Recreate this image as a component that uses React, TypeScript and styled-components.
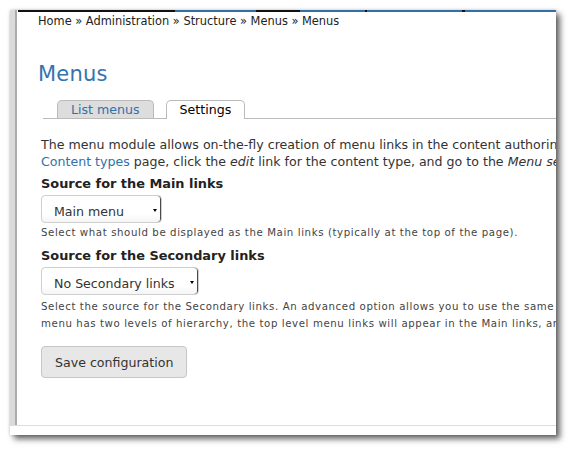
import React from "react";
import styled, { createGlobalStyle } from "styled-components";

const GlobalStyle = createGlobalStyle`
  html, body {
    margin: 0;
    padding: 0;
    background: #fff;
  }
  body {
    font-family: "DejaVu Sans", Verdana, sans-serif;
    color: #333;
  }
`;

const Page = styled.div`
  padding: 10px 0 0 10px;
  width: 572px;
  height: 451px;
  box-sizing: border-box;
`;

const Window = styled.div`
  width: 546px;
  height: 425px;
  background: #fff;
  display: flex;
  flex-direction: column;
  overflow: hidden;
  box-shadow: 4px 4px 6px rgba(0, 0, 0, 0.6), 0 0 3px rgba(0, 0, 0, 0.2);
`;

const Body = styled.div`
  flex: 1;
  display: flex;
  min-height: 0;
`;

const Rail = styled.div`
  width: 5px;
  flex-shrink: 0;
  background: #dadada;
  border-right: 2px solid #ababab;
`;

const Main = styled.div`
  flex: 1;
  min-width: 0;
  overflow: hidden;
  padding-left: 1px;
`;

const TopBar = styled.div`
  height: 2px;
  background: linear-gradient(
    to right,
    #111 0 157px,
    #3370a9 157px 238px,
    #111 238px 282px,
    #3370a9 282px 347px,
    #111 347px 349px,
    #3370a9 349px 444px,
    #111 444px 447px,
    #3370a9 447px
  );
`;

const Content = styled.div`
  padding-left: 20px;
  width: 1200px;
`;

const Breadcrumb = styled.div`
  font-size: 11.4px;
  line-height: 18px;
  color: #222;
  white-space: nowrap;
`;

const Title = styled.h1`
  margin: 30px 0 0;
  font-size: 21px;
  line-height: 28px;
  font-weight: normal;
  color: #3474ad;
  letter-spacing: 0.2px;
`;

const TabBar = styled.div`
  margin: 12px 0 0 5px;
  display: flex;
  gap: 12px;
  padding-left: 14px;
  border-bottom: 1px solid #bbb;
`;

const Tab = styled.div<{ $active?: boolean }>`
  box-sizing: border-box;
  padding: 0 13px;
  border: 1px solid #bbb;
  border-bottom: none;
  border-radius: 5px 5px 0 0;
  background: ${(p) => (p.$active ? "#fff" : "#ddd")};
  color: ${(p) => (p.$active ? "#000" : "#3370aa")};
  font-size: 12.6px;
  line-height: 17px;
  margin-bottom: ${(p) => (p.$active ? "-1px" : "0")};
  height: ${(p) => (p.$active ? "19px" : "18px")};
`;

const Form = styled.div`
  margin-left: 3px;
  padding-top: 17px;
`;

const Intro = styled.p`
  margin: 0;
  font-size: 12.6px;
  line-height: 17px;
  color: #333;
  white-space: nowrap;
`;

const Link = styled.a`
  color: #3370aa;
  text-decoration: none;
`;

const Field = styled.div<{ $top: number }>`
  margin-top: ${(p) => p.$top}px;
`;

const Label = styled.div`
  font-size: 12.9px;
  line-height: 17px;
  font-weight: bold;
  color: #222;
  white-space: nowrap;
`;

const SelectBox = styled.div<{ $width: number }>`
  margin-top: 3px;
  width: ${(p) => p.$width}px;
  height: 28px;
  box-sizing: border-box;
  display: flex;
  align-items: center;
  padding: 0 2px 0 12px;
  border: 1px solid #cfcfcf;
  border-radius: 4px;
  background: linear-gradient(#fff 0 70%, #f4f4f4);
  box-shadow: inset -1px 0 0 #4a4a4a;
`;

const SelectText = styled.span`
  font-size: 12.6px;
  line-height: 21px;
  padding-top: 5px;
  color: #333;
  white-space: nowrap;
`;

const Arrow = styled.span`
  margin-left: auto;
  margin-right: 2px;
  margin-top: 2px;
  width: 0;
  height: 0;
  border-left: 2px solid transparent;
  border-right: 2px solid transparent;
  border-top: 3px solid #000;
`;

const Help = styled.div<{ $top: number }>`
  margin-top: ${(p) => p.$top}px;
  font-size: 10.2px;
  line-height: 17px;
  letter-spacing: 0.6px;
  color: #444;
  white-space: nowrap;
`;

const SaveButton = styled.button`
  margin-top: 14px;
  height: 32px;
  padding: 0 13px;
  border: 1px solid #c6c6c6;
  border-radius: 4px;
  background: #e7e7e7;
  font-family: "DejaVu Sans", Verdana, sans-serif;
  font-size: 12.6px;
  color: #333;
`;

const Footer = styled.div`
  height: 9px;
  flex-shrink: 0;
  border-top: 1px solid #ddd;
`;

export default function App() {
  return (
    <>
      <GlobalStyle />
      <Page>
        <Window>
          <Body>
            <Rail />
            <Main>
              <TopBar />
              <Content>
                <Breadcrumb>Home » Administration » Structure » Menus » Menus</Breadcrumb>
                <Title>Menus</Title>
                <TabBar>
                  <Tab>List menus</Tab>
                  <Tab $active>Settings</Tab>
                </TabBar>
                <Form>
                  <Intro>
                    The menu module allows on-the-fly creation of menu links in the content authoring forms. To
                    configure these settings for a particular content type, visit the
                    <br />
                    <Link href="#">Content types</Link> page, click the <em>edit</em> link for the content type, and go
                    to the <em>Menu settings</em> section.
                  </Intro>
                  <Field $top={5}>
                    <Label>Source for the Main links</Label>
                    <SelectBox $width={121}>
                      <SelectText>Main menu</SelectText>
                      <Arrow />
                    </SelectBox>
                    <Help $top={1}>
                      Select what should be displayed as the Main links (typically at the top of the page).
                    </Help>
                  </Field>
                  <Field $top={6}>
                    <Label>Source for the Secondary links</Label>
                    <SelectBox $width={158}>
                      <SelectText>No Secondary links</SelectText>
                      <Arrow />
                    </SelectBox>
                    <Help $top={3}>
                      Select the source for the Secondary links. An advanced option allows you to use the same menu for
                      both Main links and Secondary links; if your
                      <br />
                      menu has two levels of hierarchy, the top level menu links will appear in the Main links, and the
                      children of the active link will appear in the Secondary links.
                    </Help>
                  </Field>
                  <SaveButton>Save configuration</SaveButton>
                </Form>
              </Content>
            </Main>
          </Body>
          <Footer />
        </Window>
      </Page>
    </>
  );
}
